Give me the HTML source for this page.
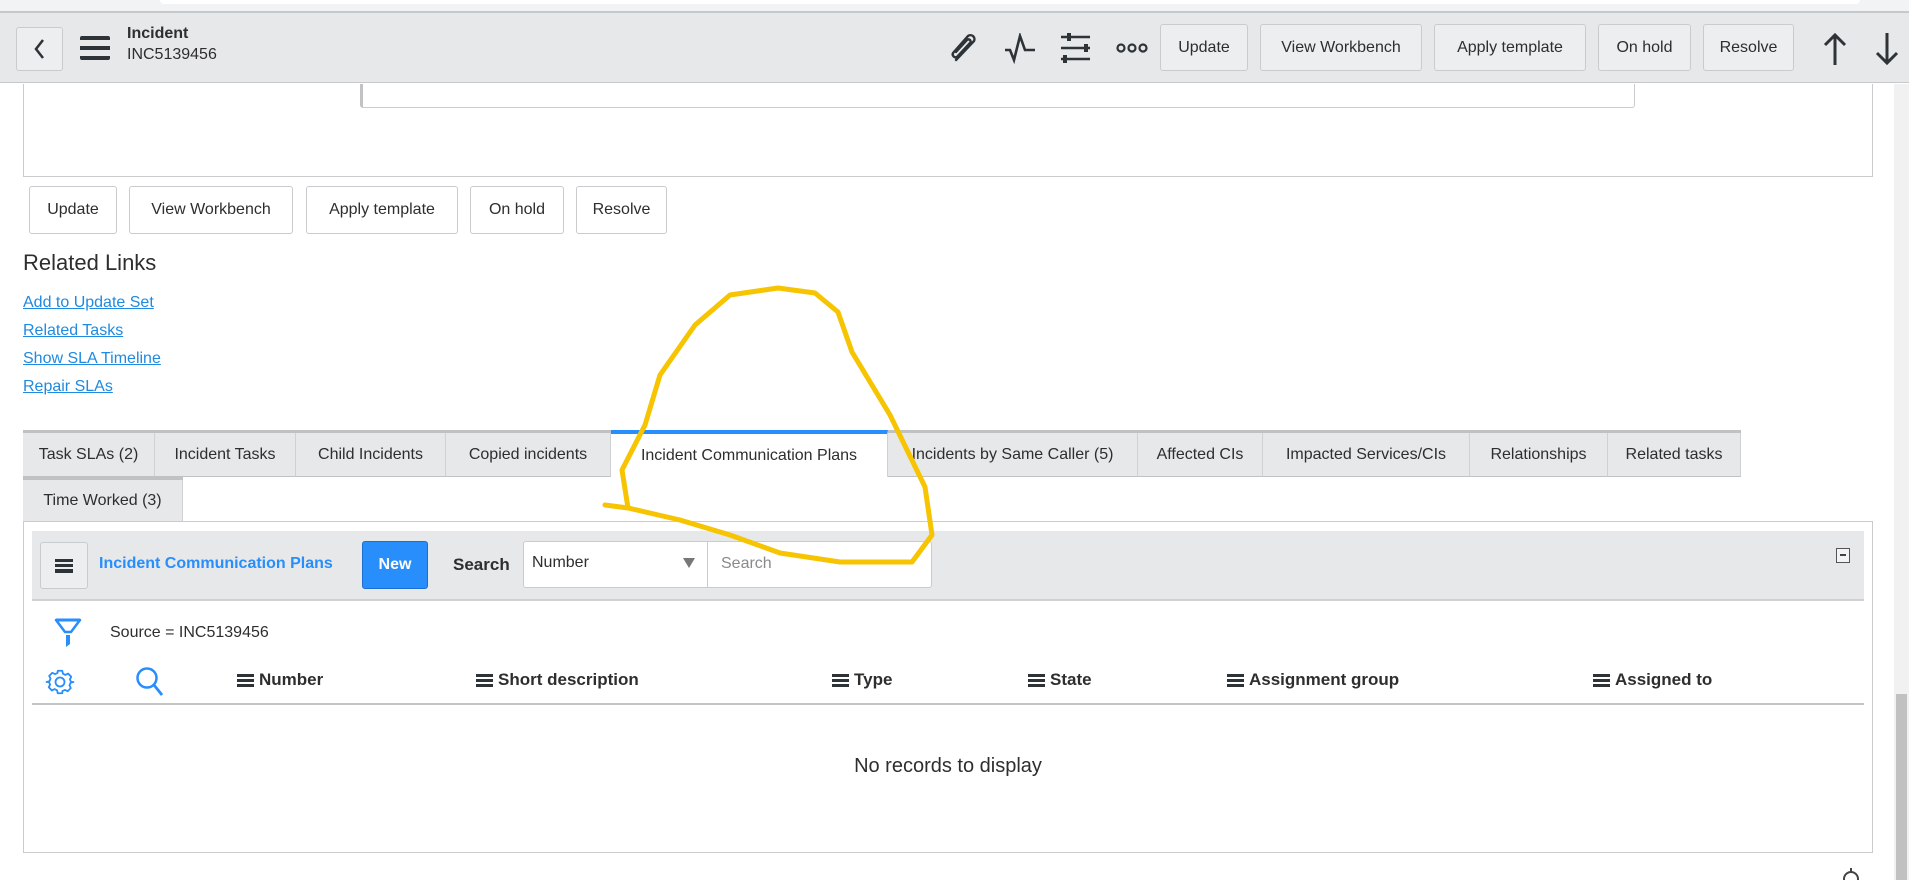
<!DOCTYPE html>
<html><head><meta charset="utf-8">
<style>
*{box-sizing:border-box;margin:0;padding:0}
body{width:1909px;height:880px;overflow:hidden;background:#fff;font-family:"Liberation Sans",Arial,sans-serif;color:#2e2e2e;position:relative}
.a{position:absolute}
.btn{position:absolute;border:1px solid #c9cbcd;border-radius:3px;background:#fff;font-size:16px;color:#2e2e2e;display:flex;align-items:center;justify-content:center;white-space:nowrap}
.hb{background:#eceeef}
.tab{position:absolute;top:433px;height:44px;background:#e6e8ea;border-right:1px solid #cfd1d3;border-bottom:1px solid #bfc1c3;font-size:16px;display:flex;align-items:center;justify-content:center;white-space:nowrap;color:#2e2e2e}
.lk{position:absolute;left:23px;color:#1f8ae0;text-decoration:underline;font-size:16px}
.col{position:absolute;top:670px;font-size:17px;font-weight:bold;color:#2e2e2e;white-space:nowrap;display:flex;align-items:center}
.ham{display:inline-block;width:17px;height:13px;margin-right:5px;background:linear-gradient(#2e3338 0 3px,transparent 3px 5px,#2e3338 5px 8px,transparent 8px 10px,#2e3338 10px 13px)}
</style></head><body>
<!-- browser strip -->
<div class="a" style="left:0;top:0;width:1909px;height:11px;background:#f1f3f4"></div>
<div class="a" style="left:160px;top:0;width:1700px;height:4px;background:#fff;border-radius:0 0 8px 8px"></div>
<!-- header -->
<div class="a" style="left:0;top:11px;width:1909px;height:72px;background:#e6e8ea;border-top:2px solid #c6c8ca;border-bottom:1px solid #c6c8ca"></div>
<div class="btn hb" style="left:16px;top:27px;width:47px;height:44px"><svg width="16" height="24" viewBox="0 0 16 24"><path d="M11 3 L4 12 L11 21" stroke="#2e3338" stroke-width="2.5" fill="none"/></svg></div>
<div class="a" style="left:80px;top:36px;width:30px;height:24px;background:linear-gradient(#2e3338 0 4px,transparent 4px 10px,#2e3338 10px 14px,transparent 14px 20px,#2e3338 20px 24px);border-radius:2px"></div>
<div class="a" style="left:127px;top:25px;font-size:16px;font-weight:bold;color:#2e2e2e">Incident</div>
<div class="a" style="left:127px;top:46px;font-size:16px;color:#2e2e2e">INC5139456</div>
<svg class="a" style="left:948px;top:33px" width="34" height="32" viewBox="0 0 34 32"><path d="M8 27 L26 8 a4 4 0 0 0 -6 -5 L5 20 a3 3 0 0 0 4 4 L22 10 a2 2 0 0 0 -3 -3 L8 19" stroke="#2e3338" stroke-width="2.4" fill="none" stroke-linecap="round"/></svg>
<svg class="a" style="left:1004px;top:33px" width="34" height="32" viewBox="0 0 34 32"><path d="M1 17 H6 L10 27 L16 3 L21 17 H31" stroke="#2e3338" stroke-width="2.6" fill="none"/></svg>
<svg class="a" style="left:1060px;top:33px" width="32" height="30" viewBox="0 0 32 30"><path d="M1 4H30M1 15H30M1 26H30" stroke="#2e3338" stroke-width="2.5"/><rect x="7" y="0" width="4" height="8" fill="#2e3338"/><rect x="24" y="11" width="4" height="8" fill="#2e3338"/><rect x="3" y="22" width="4" height="8" fill="#2e3338"/></svg>
<svg class="a" style="left:1116px;top:42px" width="32" height="12" viewBox="0 0 32 12"><circle cx="5" cy="6" r="3.5" stroke="#2e3338" stroke-width="2.2" fill="none"/><circle cx="16" cy="6" r="3.5" stroke="#2e3338" stroke-width="2.2" fill="none"/><circle cx="27" cy="6" r="3.5" stroke="#2e3338" stroke-width="2.2" fill="none"/></svg>
<div class="btn hb" style="left:1160px;top:24px;width:88px;height:47px">Update</div>
<div class="btn hb" style="left:1260px;top:24px;width:162px;height:47px">View Workbench</div>
<div class="btn hb" style="left:1434px;top:24px;width:152px;height:47px">Apply template</div>
<div class="btn hb" style="left:1598px;top:24px;width:93px;height:47px">On hold</div>
<div class="btn hb" style="left:1703px;top:24px;width:91px;height:47px">Resolve</div>
<svg class="a" style="left:1822px;top:32px" width="26" height="34" viewBox="0 0 26 34"><path d="M13 33V3M3 13L13 3L23 13" stroke="#2e3338" stroke-width="3" fill="none"/></svg>
<svg class="a" style="left:1874px;top:32px" width="26" height="34" viewBox="0 0 26 34"><path d="M13 1V31M3 21L13 31L23 21" stroke="#2e3338" stroke-width="3" fill="none"/></svg>
<!-- scrollbar -->
<div class="a" style="left:1894px;top:84px;width:15px;height:796px;background:#f1f1f1"></div>
<div class="a" style="left:1896px;top:694px;width:11px;height:186px;background:#c1c1c1"></div>
<!-- top form box -->
<div class="a" style="left:23px;top:84px;width:1850px;height:93px;border-left:1px solid #c9cbcd;border-right:1px solid #c9cbcd;border-bottom:1px solid #c9cbcd"></div>
<div class="a" style="left:360px;top:84px;width:1275px;height:24px;border-left:3px solid #c0c2c4;border-right:1px solid #c9cbcd;border-bottom:1px solid #c9cbcd;border-radius:0 0 3px 3px"></div>
<!-- buttons row -->
<div class="btn" style="left:29px;top:186px;width:88px;height:48px">Update</div>
<div class="btn" style="left:129px;top:186px;width:164px;height:48px">View Workbench</div>
<div class="btn" style="left:306px;top:186px;width:152px;height:48px">Apply template</div>
<div class="btn" style="left:470px;top:186px;width:94px;height:48px">On hold</div>
<div class="btn" style="left:576px;top:186px;width:91px;height:48px">Resolve</div>
<div class="a" style="left:23px;top:250px;font-size:22px;color:#2e2e2e">Related Links</div>
<div class="lk" style="top:294px">Add to Update Set</div>
<div class="lk" style="top:322px">Related Tasks</div>
<div class="lk" style="top:350px">Show SLA Timeline</div>
<div class="lk" style="top:378px">Repair SLAs</div>
<!-- tabs -->
<div class="a" style="left:23px;top:430px;width:1718px;height:3px;background:#bfc1c3"></div>
<div class="tab" style="left:23px;width:132px">Task SLAs (2)</div>
<div class="tab" style="left:155px;width:141px">Incident Tasks</div>
<div class="tab" style="left:296px;width:150px">Child Incidents</div>
<div class="tab" style="left:446px;width:165px">Copied incidents</div>
<div class="tab" style="left:611px;width:277px;background:#fff;border-bottom:none;top:430px;height:47px;border-top:4px solid #278efc">Incident Communication Plans</div>
<div class="tab" style="left:888px;width:250px">Incidents by Same Caller (5)</div>
<div class="tab" style="left:1138px;width:125px">Affected CIs</div>
<div class="tab" style="left:1263px;width:207px">Impacted Services/CIs</div>
<div class="tab" style="left:1470px;width:138px">Relationships</div>
<div class="tab" style="left:1608px;width:133px">Related tasks</div>
<div class="a" style="left:23px;top:477px;width:160px;height:3px;background:#bfc1c3"></div>
<div class="tab" style="left:23px;top:480px;width:160px;height:42px;border-bottom:none">Time Worked (3)</div>
<!-- panel -->
<div class="a" style="left:23px;top:521px;width:1850px;height:332px;border:1px solid #c9cbcd;border-top:1px solid #c9cbcd"></div>
<div class="a" style="left:183px;top:521px;width:1690px;height:1px;background:#c9cbcd"></div>
<div class="a" style="left:32px;top:531px;width:1832px;height:70px;background:#e6e8ea;border-bottom:2px solid #cfd1d3"></div>
<div class="btn hb" style="left:40px;top:542px;width:48px;height:47px"><span class="ham" style="margin:0;width:18px;height:14px"></span></div>
<div class="a" style="left:99px;top:555px;font-size:16px;font-weight:bold;color:#278efc">Incident Communication Plans</div>
<div class="btn" style="left:362px;top:541px;width:66px;height:48px;background:#278efc;border-color:#1a6fd0;color:#fff;font-weight:bold">New</div>
<div class="a" style="left:453px;top:555px;font-size:17px;font-weight:bold;color:#2e2e2e">Search</div>
<div class="a" style="left:523px;top:541px;width:185px;height:47px;background:#fff;border:1px solid #c9cbcd;border-radius:3px 0 0 3px"></div>
<div class="a" style="left:532px;top:554px;font-size:16px;color:#2e2e2e">Number</div>
<div class="a" style="left:683px;top:558px;width:0;height:0;border-left:6px solid transparent;border-right:6px solid transparent;border-top:10px solid #777"></div>
<div class="a" style="left:707px;top:541px;width:225px;height:47px;background:#fff;border:1px solid #c9cbcd;border-radius:0 3px 3px 0"></div>
<div class="a" style="left:721px;top:555px;font-size:16px;color:#8a8a8a">Search</div>
<div class="a" style="left:1836px;top:548px;width:14px;height:15px;border:1.5px solid #555;background:#f4f4f4"><div style="margin:5px 3px 0;height:2px;background:#444"></div></div>
<svg class="a" style="left:54px;top:617px" width="28" height="34" viewBox="0 0 28 34"><path d="M2 3H26L17 15H11Z" stroke="#278efc" stroke-width="2.5" fill="none" stroke-linejoin="round"/><path d="M2 3H26" stroke="#278efc" stroke-width="3"/><path d="M12 18H16V27L12 30Z" fill="#278efc"/></svg>
<div class="a" style="left:110px;top:624px;font-size:16px;color:#2e2e2e">Source = INC5139456</div>
<svg class="a" style="left:45px;top:667px" width="30" height="30" viewBox="0 0 24 24"><path d="M12 8a4 4 0 1 0 0 8a4 4 0 1 0 0-8z M10 2h4l.6 2.6 2.2 1.1 2.4-1.2 2.8 2.8-1.2 2.4 1 2.3L24 12v0l-2.6.7-1 2.3 1.2 2.4-2.8 2.8-2.4-1.2-2.2 1.1L14 22h-4l-.6-2.6-2.2-1.1-2.4 1.2-2.8-2.8 1.2-2.4-1-2.3L0 12l2.6-.7 1-2.3-1.2-2.4 2.8-2.8 2.4 1.2 2.2-1.1z" stroke="#278efc" stroke-width="1.6" fill="none" stroke-linejoin="round" transform="translate(1.2 1.2) scale(.9)"/></svg>
<svg class="a" style="left:134px;top:665px" width="32" height="34" viewBox="0 0 32 34"><circle cx="13" cy="13" r="9.5" stroke="#278efc" stroke-width="2.5" fill="none"/><path d="M20 20L28 30" stroke="#278efc" stroke-width="2.8"/></svg>
<div class="col" style="left:237px"><span class="ham"></span>Number</div>
<div class="col" style="left:476px"><span class="ham"></span>Short description</div>
<div class="col" style="left:832px"><span class="ham"></span>Type</div>
<div class="col" style="left:1028px"><span class="ham"></span>State</div>
<div class="col" style="left:1227px"><span class="ham"></span>Assignment group</div>
<div class="col" style="left:1593px"><span class="ham"></span>Assigned to</div>
<div class="a" style="left:32px;top:703px;width:1832px;height:2px;background:#c2c4c6"></div>
<div class="a" style="left:0;top:755px;width:1896px;text-align:center;font-size:20px;color:#2e2e2e">No records to display</div>
<svg class="a" style="left:1840px;top:868px" width="22" height="12" viewBox="0 0 22 12"><circle cx="11" cy="11" r="7" stroke="#444" stroke-width="2" fill="none"/><path d="M11 0V4" stroke="#444" stroke-width="2"/></svg>
<!-- yellow annotation -->
<svg class="a" style="left:0;top:0" width="1909" height="880" viewBox="0 0 1909 880"><path d="M605 505 L628 508 L622 470 L645 425 L660 375 L695 325 L730 295 L778 288 L815 293 L838 312 L852 352 L890 415 L925 487 L932 535 L912 562 L840 562 L780 553 L730 535 L680 520 L628 508" stroke="#f6c400" stroke-width="5" fill="none" stroke-linecap="round" stroke-linejoin="round"/></svg>
</body></html>
